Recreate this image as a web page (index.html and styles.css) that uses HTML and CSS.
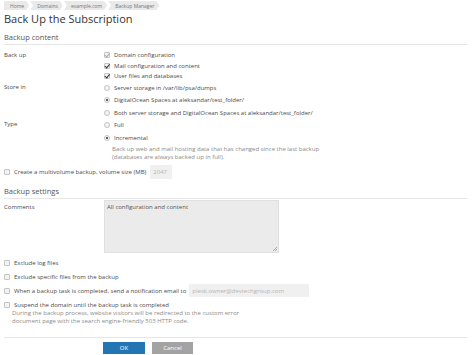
FILE: index.html
```html
<!DOCTYPE html>
<html>
<head>
<meta charset="utf-8">
<link rel="stylesheet" href="styles.css">
</head>
<body>
<div class="page">
  <nav class="crumbs">
    <span class="crumb first">Home</span>
    <span class="crumb">Domains</span>
    <span class="crumb">example.com</span>
    <span class="crumb">Backup Manager</span>
  </nav>
  <h1 class="title">Back Up the Subscription</h1>

  <h2 class="section">Backup content</h2>

  <div class="row">
    <div class="label">Back up</div>
    <div class="field">
      <div class="opt cbrow"><span class="cb checked disabled"></span><span class="txt">Domain configuration</span></div>
      <div class="opt cbrow"><span class="cb checked"></span><span class="txt">Mail configuration and content</span></div>
      <div class="opt cbrow"><span class="cb checked"></span><span class="txt">User files and databases</span></div>
    </div>
  </div>

  <div class="row">
    <div class="label">Store in</div>
    <div class="field">
      <div class="opt rbrow"><span class="rb"></span><span class="txt">Server storage in /var/lib/psa/dumps</span></div>
      <div class="opt rbrow"><span class="rb on"></span><span class="txt">DigitalOcean Spaces at aleksandar/test_folder/</span></div>
      <div class="opt rbrow"><span class="rb"></span><span class="txt">Both server storage and DigitalOcean Spaces at aleksandar/test_folder/</span></div>
    </div>
  </div>

  <div class="row">
    <div class="label">Type</div>
    <div class="field">
      <div class="opt rbrow"><span class="rb"></span><span class="txt">Full</span></div>
      <div class="opt rbrow"><span class="rb on"></span><span class="txt">Incremental</span></div>
      <div class="desc">Back up web and mail hosting data that has changed since the last backup<br>(databases are always backed up in full).</div>
    </div>
  </div>

  <div class="single multi">
    <span class="cb"></span><span class="txt">Create a multivolume backup, volume size (MB)</span>
    <span class="input small">2047</span>
  </div>

  <h2 class="section s2">Backup settings</h2>

  <div class="row comments">
    <div class="label">Comments</div>
    <div class="field">
      <div class="textarea">All configuration and content<span class="grip"></span></div>
    </div>
  </div>

  <div class="single ex1"><span class="cb"></span><span class="txt">Exclude log files</span></div>
  <div class="single ex2"><span class="cb"></span><span class="txt">Exclude specific files from the backup</span></div>
  <div class="single notify"><span class="cb"></span><span class="txt">When a backup task is completed, send a notification email to</span>
    <span class="input email">plesk.owner@devtechgroup.com</span>
  </div>
  <div class="single suspend"><span class="cb"></span><span class="txt">Suspend the domain until the backup task is completed</span></div>
  <div class="desc sdesc">During the backup process, website visitors will be redirected to the custom error<br>document page with the search engine-friendly 503 HTTP code.</div>

  <div class="buttons">
    <span class="btn ok">OK</span>
    <span class="btn cancel">Cancel</span>
  </div>
</div>
</body>
</html>
```
FILE: styles.css
```css
html, body {
  margin: 0;
  padding: 0;
  background: #ffffff;
}
body {
  font-family: "Open Sans", "DejaVu Sans", sans-serif;
  font-size: 6px;
  color: #4a4a4a;
  overflow: hidden;
}
.page {
  padding: 0 7px 0 4px;
}
.crumbs {
  display: flex;
  height: 9px;
  margin-top: 1px;
}
.crumb {
  display: flex;
  align-items: center;
  background: #e9e9e9;
  color: #777;
  font-size: 5px;
  padding: 0 5px 0 7px;
  margin-right: 1px;
  clip-path: polygon(0 0, calc(100% - 3px) 0, 100% 50%, calc(100% - 3px) 100%, 0 100%, 3px 50%);
}
.crumb.first {
  padding-left: 6px;
  clip-path: polygon(0 0, calc(100% - 3px) 0, 100% 50%, calc(100% - 3px) 100%, 0 100%);
}
.title {
  font-size: 11px;
  font-weight: normal;
  color: #333;
  margin: 2px 0 0 0;
  line-height: 14px;
}
.section {
  font-size: 7.5px;
  font-weight: normal;
  color: #555;
  margin: 6px 0 0 0;
  line-height: 10px;
  padding-bottom: 2px;
  border-bottom: 1px solid #e6e6e6;
}
.row {
  display: flex;
}
.label {
  width: 100px;
  flex: none;
  line-height: 10.5px;
}
.field {
  flex: 1;
}
.section + .row {
  margin-top: 5px;
}
.opt {
  display: flex;
  align-items: center;
}
.cbrow { height: 10.5px; }
.rbrow { height: 12.5px; }
.row .label { height: 10.5px; display: flex; align-items: center; }
.row + .row { margin-top: 0; }
.txt {
  white-space: nowrap;
}
.cb, .rb {
  display: inline-block;
  flex: none;
  width: 4px;
  height: 4px;
  border: 1px solid #c4c4c4;
  background: #f3f3f3;
  margin-right: 4px;
  position: relative;
}
.cb { border-radius: 1px; }
.rb { border-radius: 50%; }
.cb.checked::after {
  content: "";
  position: absolute;
  left: 1px;
  top: -1px;
  width: 1.5px;
  height: 3.5px;
  border-right: 1.2px solid #333;
  border-bottom: 1.2px solid #333;
  transform: rotate(40deg);
}
.cb.checked.disabled::after {
  border-color: #aaa;
}
.rb.on::after {
  content: "";
  position: absolute;
  left: 1px;
  top: 1px;
  width: 2px;
  height: 2px;
  border-radius: 50%;
  background: #333;
}
.desc {
  color: #8a8a8a;
  line-height: 8.5px;
  padding-left: 8px;
  margin-top: 0.5px;
  white-space: nowrap;
}
.single {
  display: flex;
  align-items: center;
}
.multi {
  margin-top: 3px;
  height: 14px;
}
.input {
  display: inline-flex;
  align-items: center;
  background: #f0f0f0;
  color: #b5b5b5;
  padding: 0 3px;
  height: 14px;
  margin-left: 4px;
}
.input.small { width: 16px; }
.input.email { width: 114px; height: 13px; margin-left: 3px; }
.s2 {
  margin-top: 7px;
}
.section + .row.comments {
  margin-top: 1px;
}
.comments .label {
  align-items: flex-start;
  padding-top: 2px;
}
.textarea {
  position: relative;
  background: #ebebeb;
  border: 1px solid #e0e0e0;
  padding: 2px 0 0 2px;
  box-sizing: border-box;
  width: 175px;
  height: 53px;
  line-height: 9px;
  color: #555;
}
.grip {
  position: absolute;
  right: 1px;
  bottom: 1px;
  width: 4px;
  height: 4px;
  background: linear-gradient(135deg, transparent 45%, #aaa 45%, #aaa 55%, transparent 55%, transparent 70%, #aaa 70%, #aaa 80%, transparent 80%);
}
.ex1 { margin-top: 5px; height: 10px; }
.ex2 { margin-top: 4px; height: 10px; }
.notify { margin-top: 2px; height: 14px; }
.suspend { margin-top: 2px; height: 10px; }
.sdesc { padding-left: 8px; margin-top: -1px; }
.buttons {
  border-top: 1px solid #e6e6e6;
  margin-top: 11px;
  padding: 4px 0 0 99px;
  display: flex;
  gap: 7px;
}
.btn {
  display: inline-flex;
  justify-content: center;
  align-items: center;
  width: 42px;
  height: 12px;
  color: #fff;
  font-size: 6px;
}
.btn.ok { background: #2375b3; }
.btn.cancel { background: #a3a3a3; width: 41px; }
```
